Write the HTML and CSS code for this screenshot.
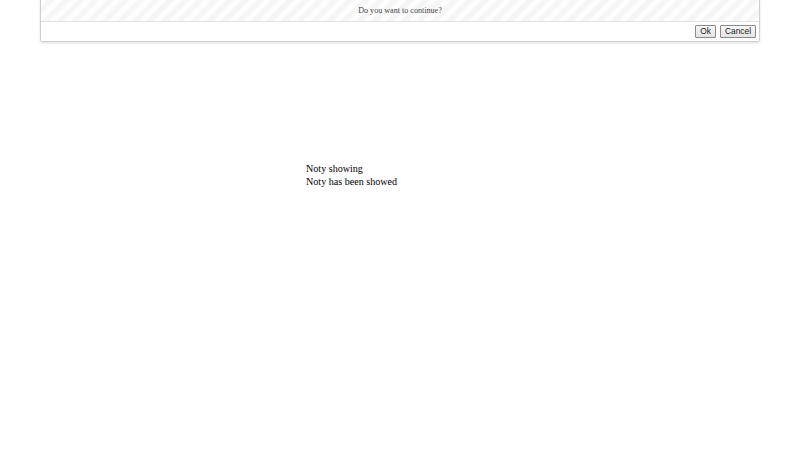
FILE: index.html
```html
<!DOCTYPE html>
<html>
<head>
<meta charset="utf-8">
<link rel="stylesheet" href="styles.css">
</head>
<body>
<div class="page">
  <div class="log">
    <div class="log-line">Noty showing</div>
    <div class="log-line">Noty has been showed</div>
  </div>
</div>
<div class="noty">
  <div class="noty-message">Do you want to continue?</div>
  <div class="noty-buttons">
    <button class="btn">Ok</button>
    <button class="btn">Cancel</button>
  </div>
</div>
</body>
</html>
```

FILE: styles.css
```css
html, body {
  margin: 0;
  padding: 0;
  background: #fff;
}
.page {
  padding: 162px 0 0 306px;
}
.log {
  font-family: "Liberation Serif", serif;
  font-size: 10.1px;
  line-height: 13px;
  color: #000;
}
.noty {
  position: fixed;
  top: -2px;
  left: 40px;
  width: 718px;
  border: 1px solid #cfcfcf;
  border-radius: 0 0 2px 2px;
  box-shadow: 0 1px 3px rgba(0, 0, 0, 0.12);
  background: #fff;
}
.noty-message {
  font-family: "Liberation Serif", serif;
  font-size: 8.1px;
  line-height: 10px;
  color: #444;
  text-align: center;
  padding: 7px 6px 5px;
  background-color: #fdfdfd;
  background-image: repeating-linear-gradient(135deg, #fdfdfd 0, #fdfdfd 5px, #f6f6f6 5px, #f6f6f6 10.6px);
}
.noty-buttons {
  border-top: 1px solid #e2e2e2;
  padding: 3px;
  display: flex;
  justify-content: flex-end;
  gap: 4px;
  background: #fff;
}
.btn {
  font-family: "Liberation Sans", Arial, sans-serif;
  font-size: 8.4px;
  line-height: 9px;
  color: #222;
  height: 13px;
  padding: 0 4px;
  margin: 0;
  border: 1px solid #8a8a8a;
  border-radius: 1px;
  background: linear-gradient(#f6f6f6, #e4e4e4);
}
```
